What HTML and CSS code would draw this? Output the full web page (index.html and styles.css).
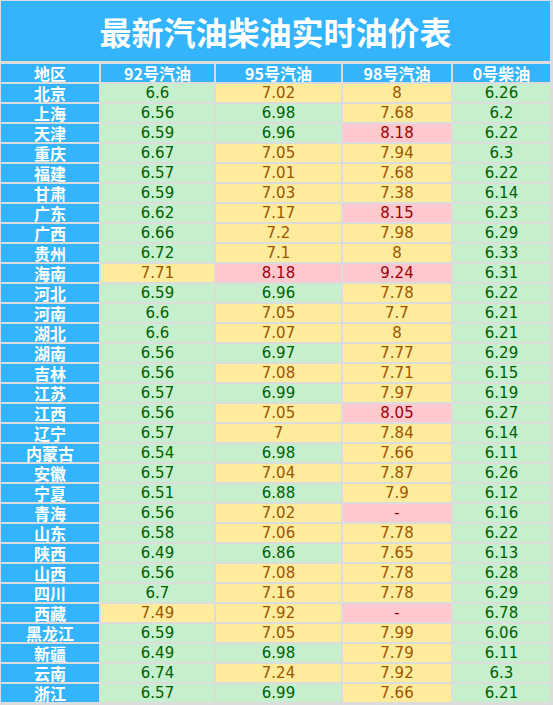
FILE: index.html
```html
<!DOCTYPE html>
<html lang="zh-CN">
<head>
  <meta charset="UTF-8">
  <title>最新汽油柴油实时油价表</title>
  <link rel="stylesheet" href="styles.css">
</head>
<body>
  <div class="sheet">
    <div class="title">最新汽油柴油实时油价表</div>

    <div class="head">地区</div>
    <div class="head">92号汽油</div>
    <div class="head">95号汽油</div>
    <div class="head">98号汽油</div>
    <div class="head">0号柴油</div>

    <div class="region">北京</div><div class="good">6.6</div><div class="mid">7.02</div><div class="mid">8</div><div class="good">6.26</div>
    <div class="region">上海</div><div class="good">6.56</div><div class="good">6.98</div><div class="mid">7.68</div><div class="good">6.2</div>
    <div class="region">天津</div><div class="good">6.59</div><div class="good">6.96</div><div class="bad">8.18</div><div class="good">6.22</div>
    <div class="region">重庆</div><div class="good">6.67</div><div class="mid">7.05</div><div class="mid">7.94</div><div class="good">6.3</div>
    <div class="region">福建</div><div class="good">6.57</div><div class="mid">7.01</div><div class="mid">7.68</div><div class="good">6.22</div>
    <div class="region">甘肃</div><div class="good">6.59</div><div class="mid">7.03</div><div class="mid">7.38</div><div class="good">6.14</div>
    <div class="region">广东</div><div class="good">6.62</div><div class="mid">7.17</div><div class="bad">8.15</div><div class="good">6.23</div>
    <div class="region">广西</div><div class="good">6.66</div><div class="mid">7.2</div><div class="mid">7.98</div><div class="good">6.29</div>
    <div class="region">贵州</div><div class="good">6.72</div><div class="mid">7.1</div><div class="mid">8</div><div class="good">6.33</div>
    <div class="region">海南</div><div class="mid">7.71</div><div class="bad">8.18</div><div class="bad">9.24</div><div class="good">6.31</div>
    <div class="region">河北</div><div class="good">6.59</div><div class="good">6.96</div><div class="mid">7.78</div><div class="good">6.22</div>
    <div class="region">河南</div><div class="good">6.6</div><div class="mid">7.05</div><div class="mid">7.7</div><div class="good">6.21</div>
    <div class="region">湖北</div><div class="good">6.6</div><div class="mid">7.07</div><div class="mid">8</div><div class="good">6.21</div>
    <div class="region">湖南</div><div class="good">6.56</div><div class="good">6.97</div><div class="mid">7.77</div><div class="good">6.29</div>
    <div class="region">吉林</div><div class="good">6.56</div><div class="mid">7.08</div><div class="mid">7.71</div><div class="good">6.15</div>
    <div class="region">江苏</div><div class="good">6.57</div><div class="good">6.99</div><div class="mid">7.97</div><div class="good">6.19</div>
    <div class="region">江西</div><div class="good">6.56</div><div class="mid">7.05</div><div class="bad">8.05</div><div class="good">6.27</div>
    <div class="region">辽宁</div><div class="good">6.57</div><div class="mid">7</div><div class="mid">7.84</div><div class="good">6.14</div>
    <div class="region">内蒙古</div><div class="good">6.54</div><div class="good">6.98</div><div class="mid">7.66</div><div class="good">6.11</div>
    <div class="region">安徽</div><div class="good">6.57</div><div class="mid">7.04</div><div class="mid">7.87</div><div class="good">6.26</div>
    <div class="region">宁夏</div><div class="good">6.51</div><div class="good">6.88</div><div class="mid">7.9</div><div class="good">6.12</div>
    <div class="region">青海</div><div class="good">6.56</div><div class="mid">7.02</div><div class="bad">-</div><div class="good">6.16</div>
    <div class="region">山东</div><div class="good">6.58</div><div class="mid">7.06</div><div class="mid">7.78</div><div class="good">6.22</div>
    <div class="region">陕西</div><div class="good">6.49</div><div class="good">6.86</div><div class="mid">7.65</div><div class="good">6.13</div>
    <div class="region">山西</div><div class="good">6.56</div><div class="mid">7.08</div><div class="mid">7.78</div><div class="good">6.28</div>
    <div class="region">四川</div><div class="good">6.7</div><div class="mid">7.16</div><div class="mid">7.78</div><div class="good">6.29</div>
    <div class="region">西藏</div><div class="mid">7.49</div><div class="mid">7.92</div><div class="bad">-</div><div class="good">6.78</div>
    <div class="region">黑龙江</div><div class="good">6.59</div><div class="mid">7.05</div><div class="mid">7.99</div><div class="good">6.06</div>
    <div class="region">新疆</div><div class="good">6.49</div><div class="good">6.98</div><div class="mid">7.79</div><div class="good">6.11</div>
    <div class="region">云南</div><div class="good">6.74</div><div class="mid">7.24</div><div class="mid">7.92</div><div class="good">6.3</div>
    <div class="region">浙江</div><div class="good">6.57</div><div class="good">6.99</div><div class="mid">7.66</div><div class="good">6.21</div>
  </div>
</body>
</html>
```

FILE: styles.css
```css
/* Sheet layout */
body {
    margin: 0;
    background-color: #dcdcdc;
    font-family: "DejaVu Sans", "Noto Sans CJK SC", sans-serif;
}

.sheet {
    display: grid;
    grid-template-columns: 98px 113px 125px 108px 97px;
    grid-template-rows: 61px;
    grid-auto-rows: 18px;
    gap: 2px;
    padding: 1px 3px 2px 1px;
    width: 553px;
    box-sizing: border-box;
}

.sheet > div {
    display: flex;
    align-items: center;
    justify-content: center;
    line-height: 18px;
    white-space: nowrap;
}

.title {
    grid-column: 1 / -1;
    margin-bottom: 1px;
    background-color: #33b4fc;
    color: #ffffff;
    font-family: "Noto Sans CJK SC", sans-serif;
    font-size: 32px;
    font-weight: bold;
}

.head,
.region {
    background-color: #33b4fc;
    color: #ffffff;
    font-family: "Noto Sans CJK SC", sans-serif;
    font-size: 16px;
    font-weight: bold;
}

/* Price cells */
.good,
.mid,
.bad {
    font-size: 15px;
}

.good {
    background-color: #c6efce;
    color: #006100;
}

.mid {
    background-color: #ffeb9c;
    color: #9c5700;
}

.bad {
    background-color: #ffc7ce;
    color: #9c0006;
}
```
